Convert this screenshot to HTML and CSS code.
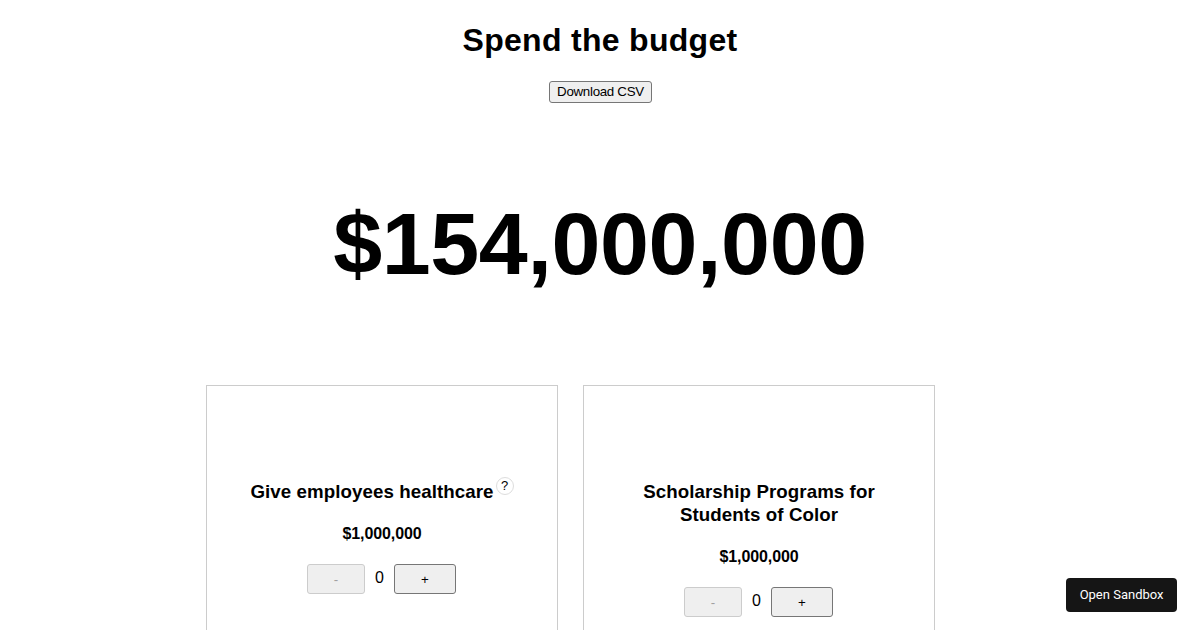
FILE: index.html
```html
<!DOCTYPE html>
<html lang="en">
<head>
    <meta charset="UTF-8">
    <title>Spend the budget</title>
    <link rel="stylesheet" href="styles.css">
</head>

<body>
    <div class="container">
        <h1>Spend the budget</h1>
        <button class="download">Download CSV</button>
        <div class="total">$154,000,000</div>

        <div class="cards">
            <div class="card">
                <h2>Give employees healthcare<span class="help">?</span></h2>
                <div class="price">$1,000,000</div>
                <div class="stepper">
                    <button class="step" disabled>-</button>
                    <span class="count">0</span>
                    <button class="step">+</button>
                </div>
            </div>

            <div class="card">
                <h2>Scholarship Programs for Students of Color</h2>
                <div class="price">$1,000,000</div>
                <div class="stepper">
                    <button class="step" disabled>-</button>
                    <span class="count">0</span>
                    <button class="step">+</button>
                </div>
            </div>
        </div>
    </div>

    <button class="sandbox">Open Sandbox</button>
</body>
</html>
```

FILE: styles.css
```css
html, body {
    height: 630px;
    overflow: hidden;
}

body {
    margin: 0;
    font-family: "Liberation Sans", Arial, sans-serif;
    color: #000;
    background-color: #fff;
}

.container {
    display: flex;
    flex-direction: column;
    align-items: center;
}

h1 {
    margin: 22px 0 0;
    font-size: 32px;
    line-height: 37px;
    font-weight: bold;
    letter-spacing: 0.3px;
}

.download {
    margin-top: 22px;
    margin-left: 1px;
    height: 22px;
    padding: 0 7px 2px;
    font-family: "Liberation Sans", Arial, sans-serif;
    font-size: 13.33px;
    letter-spacing: -0.3px;
    color: #000;
    background-color: #efefef;
    border: 1px solid #767676;
    border-radius: 3px;
}

.total {
    margin-top: 86px;
    font-size: 88px;
    line-height: 110px;
    font-weight: bold;
    letter-spacing: -0.4px;
}

.cards {
    display: flex;
    gap: 25px;
    margin-top: 86px;
    margin-left: -59px;
}

.card {
    width: 352px;
    height: 300px;
    padding-top: 94px;
    box-sizing: border-box;
    border: 1px solid #ccc;
    text-align: center;
}

h2 {
    margin: 0 auto;
    width: 270px;
    font-size: 18.72px;
    line-height: 23px;
    font-weight: bold;
    letter-spacing: 0.08px;
}

.help {
    display: inline-block;
    position: relative;
    top: -3px;
    width: 16px;
    height: 16px;
    margin-left: 2px;
    vertical-align: top;
    font-size: 13px;
    line-height: 16px;
    font-weight: normal;
    letter-spacing: 0;
    border: 1px solid #ddd;
    border-radius: 50%;
}

.price {
    margin-top: 22px;
    font-size: 16px;
    line-height: 18px;
    font-weight: bold;
    letter-spacing: -0.1px;
}

.stepper {
    display: flex;
    justify-content: center;
    align-items: center;
    gap: 10px;
    margin-top: 21px;
    margin-left: -1px;
}

.count {
    font-size: 16px;
    margin-top: -3px;
}

.step {
    width: 62px;
    height: 30px;
    padding: 0;
    font-family: "Liberation Sans", Arial, sans-serif;
    font-size: 13.33px;
    color: #000;
    background-color: #efefef;
    border: 1px solid #767676;
    border-radius: 3px;
}

.step:disabled {
    width: 58px;
    color: #a0a0a0;
    border-color: #ccc;
}

.sandbox {
    position: fixed;
    right: 23px;
    bottom: 18px;
    height: 34px;
    padding: 0 13.5px 1px;
    font-family: Roboto, sans-serif;
    font-size: 13px;
    color: #fff;
    background-color: #151515;
    border: none;
    border-radius: 4px;
}
```
